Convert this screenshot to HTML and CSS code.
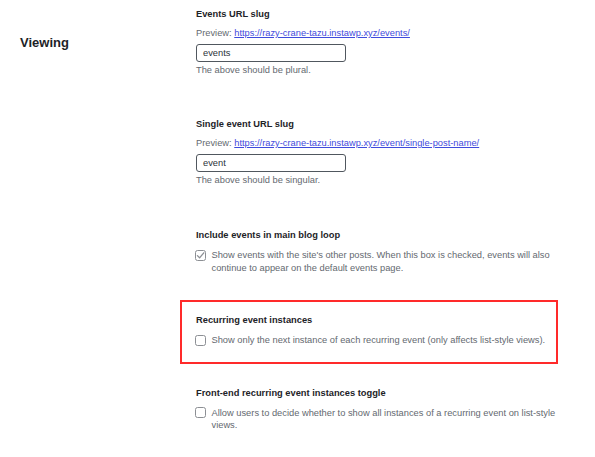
FILE: index.html
```html
<!DOCTYPE html>
<html lang="en">
<head>
<meta charset="utf-8">
<title>Viewing settings</title>
<link rel="stylesheet" href="styles.css">
</head>
<body>
<div class="layout">
  <div class="side"><h2 class="side-title">Viewing</h2></div>
  <div class="main">
    <div class="field field-first">
      <div class="field-title">Events URL slug</div>
      <div class="preview">Preview: <a href="#" class="link">https://razy-crane-tazu.instawp.xyz/events/</a></div>
      <input class="slug" type="text" value="events">
      <div class="help">The above should be plural.</div>
    </div>
    <div class="field">
      <div class="field-title">Single event URL slug</div>
      <div class="preview">Preview: <a href="#" class="link">https://razy-crane-tazu.instawp.xyz/event/single-post-name/</a></div>
      <input class="slug" type="text" value="event">
      <div class="help">The above should be singular.</div>
    </div>
    <div class="field field-loop">
      <div class="field-title">Include events in main blog loop</div>
      <label class="check">
        <span class="box"><svg viewBox="0 0 11 11" width="11" height="11"><path d="M2.4 5.6 L4.6 7.8 L8.8 2.8" fill="none" stroke="#8c8f94" stroke-width="1.3" stroke-linecap="round" stroke-linejoin="round"/></svg></span>
        <span class="check-text">Show events with the site's other posts. When this box is checked, events will also continue to appear on the default events page.</span>
      </label>
    </div>
    <div class="field field-marked">
      <div class="field-title">Recurring event instances</div>
      <label class="check">
        <span class="box"></span>
        <span class="check-text">Show only the next instance of each recurring event (only affects list-style views).</span>
      </label>
    </div>
    <div class="field field-last">
      <div class="field-title">Front-end recurring event instances toggle</div>
      <label class="check">
        <span class="box"></span>
        <span class="check-text">Allow users to decide whether to show all instances of a recurring event on list-style views.</span>
      </label>
    </div>
  </div>
</div>
</body>
</html>
```
FILE: styles.css
```css
html, body {
  margin: 0;
  padding: 0;
  background: #ffffff;
}
body {
  font-family: "Liberation Sans", Arial, sans-serif;
  font-size: 9.3px;
  line-height: 13px;
  color: #1d2327;
}
.layout {
  display: flex;
  align-items: flex-start;
}
.side {
  width: 160px;
  padding-left: 20px;
  padding-top: 35px;
}
.side-title {
  margin: 0;
  font-size: 13px;
  line-height: 16px;
  font-weight: bold;
  color: #1d2327;
}
.main {
  width: 380px;
  display: flex;
  flex-direction: column;
  padding-top: 8px;
}
.field {
  padding-left: 16px;
  display: flex;
  flex-direction: column;
  align-items: flex-start;
  margin-top: 41px;
}
.field-first {
  margin-top: 0;
}
.field-loop {
  margin-top: 42px;
}
.field-title {
  font-weight: bold;
  color: #1d2327;
}
.preview {
  margin-top: 6px;
  color: #646970;
}
.link {
  color: #3f4bdc;
  text-decoration: underline;
}
.slug {
  box-sizing: border-box;
  margin: 4px 0 0 0;
  width: 150px;
  height: 18px;
  padding: 0 6px;
  border: 1px solid #50575e;
  border-radius: 3px;
  font-family: "Liberation Sans", Arial, sans-serif;
  font-size: 9.3px;
  color: #2c3338;
  background: #fff;
  outline: none;
}
.help {
  margin-top: 2px;
  color: #646970;
}
.check {
  display: flex;
  align-items: flex-start;
  margin-top: 7px;
  color: #646970;
  line-height: 12.5px;
}
.box {
  box-sizing: border-box;
  flex: none;
  width: 11px;
  height: 11px;
  margin-top: 0.5px;
  margin-left: -1px;
  margin-right: 5.5px;
  border: 1px solid #8c8f94;
  border-radius: 2.5px;
  background: #fff;
  display: flex;
  align-items: center;
  justify-content: center;
}
.box svg {
  display: block;
  flex: none;
}
.check-text {
  flex: 1;
}
.field-marked {
  margin-top: 26px;
  width: 378px;
  box-sizing: border-box;
  border: 2px solid #ff2a2a;
  padding: 12px 0 15px 14px;
}
.field-last {
  margin-top: 23px;
}
```
